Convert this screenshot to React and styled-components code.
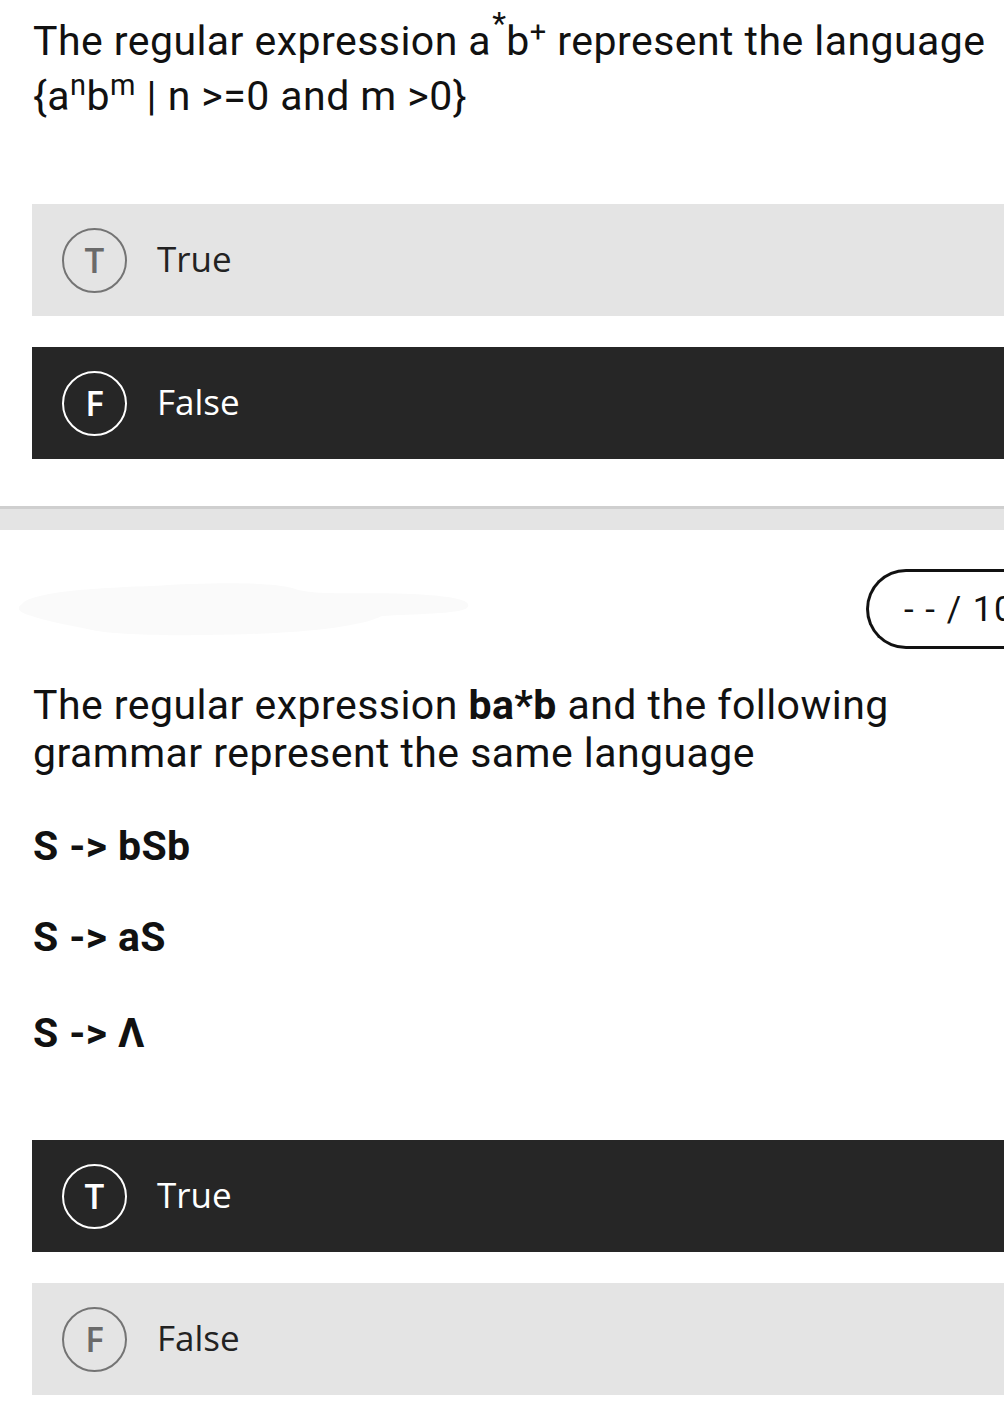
import React from "react";
import styled, { createGlobalStyle } from "styled-components";

const Global = createGlobalStyle`
  html, body { margin: 0; padding: 0; background: #ffffff; }
  body { overflow-x: hidden; width: 1004px; }
  #root { width: 1004px; overflow: hidden; }
`;

const Page = styled.div`
  width: 1004px;
  height: 1420px;
  overflow: hidden;
  font-family: Roboto, "Liberation Sans", Arial, sans-serif;
  color: #111;
`;

const Section = styled.section`
  padding: ${(p) => p.$pt || 0}px 0 0 32px;
`;

const Question = styled.div`
  font-family: Roboto, "Liberation Sans", Arial, sans-serif;
  font-size: 41px;
  letter-spacing: 0.45px;
  line-height: ${(p) => p.$lh || 48}px;
  color: #111;
  padding-left: 1px;
  margin-top: ${(p) => p.$mt || 0}px;
  white-space: nowrap;
  b { font-weight: 700; }
`;

const Sup = styled.span`
  font-size: 29px;
  line-height: 0;
  vertical-align: ${(p) => p.$raise || 15}px;
`;

const Star = styled.span`
  font-size: 32px;
  line-height: 0;
  vertical-align: 21px;
  margin-left: 1px;
`;

const Options = styled.div`
  display: flex;
  flex-direction: column;
  gap: 31px;
  margin-top: ${(p) => p.$mt}px;
`;

const Option = styled.div`
  display: flex;
  align-items: center;
  gap: 30px;
  height: 112px;
  padding-left: 30px;
  background: ${(p) => (p.$selected ? "#262626" : "#e4e4e4")};
  color: ${(p) => (p.$selected ? "#ffffff" : "#222222")};
  font-family: "Open Sans", "Noto Sans", sans-serif;
  font-size: 35px;
`;

const Badge = styled.span`
  box-sizing: border-box;
  width: 65px;
  height: 65px;
  border-radius: 50%;
  border: 2px solid ${(p) => (p.$selected ? "#ffffff" : "#747474")};
  color: ${(p) => (p.$selected ? "#ffffff" : "#6a6a6a")};
  display: flex;
  align-items: center;
  justify-content: center;
  font-family: "Open Sans", "Noto Sans", sans-serif;
  font-weight: 600;
  font-size: 35px;
  line-height: 1;
  padding-bottom: 2px;
  flex-shrink: 0;
`;

const Label = styled.span`
  line-height: 1;
  padding-bottom: 3px;
`;

const Divider = styled.div`
  margin-top: 47px;
  height: 21px;
  border-top: 3px solid #cfcfcf;
  background: #e4e4e4;
`;

const Header = styled.div`
  display: flex;
  align-items: center;
  justify-content: space-between;
  margin-top: 39px;
  padding-left: 12px;
`;

const Blob = styled.svg`
  display: block;
  flex-shrink: 0;
`;

const Points = styled.div`
  box-sizing: border-box;
  width: 200px;
  height: 80px;
  margin-right: -62px;
  border: 3px solid #111;
  border-right: none;
  border-radius: 40px 0 0 40px;
  display: flex;
  align-items: center;
  padding-left: 35px;
  font-family: Roboto, "Liberation Sans", Arial, sans-serif;
  font-size: 35px;
  letter-spacing: 1.5px;
  color: #111;
  flex-shrink: 0;
  white-space: nowrap;
`;

const Rule = styled.p`
  margin: ${(p) => p.$mt}px 0 0 0;
  padding-left: 1px;
  font-family: Roboto, "Liberation Sans", Arial, sans-serif;
  font-weight: 700;
  font-size: 41px;
  letter-spacing: 0.4px;
  line-height: 47px;
  color: #111;
`;

function OptionRow({ letter, label, selected }) {
  return (
    <Option $selected={selected}>
      <Badge $selected={selected}>{letter}</Badge>
      <Label>{label}</Label>
    </Option>
  );
}

export default function App() {
  return (
    <Page>
      <Global />
      <Section $pt={14}>
        <Question $lh={55}>
          The regular expression a<Star>*</Star>b<Sup $raise={13}>+</Sup> represent the language
          <br />
          {"{"}a<Sup>n</Sup>b<Sup>m</Sup> | n &gt;=0 and m &gt;0{"}"}
        </Question>
        <Options $mt={80}>
          <OptionRow letter="T" label="True" />
          <OptionRow letter="F" label="False" selected />
        </Options>
      </Section>
      <Divider />
      <Header>
        <Blob width="460" height="70" viewBox="0 0 460 70" aria-hidden="true">
          <path
            d="M10 30 C 20 18, 80 14, 140 12 C 200 8, 260 8, 280 14 C 300 22, 340 18, 400 20 C 440 22, 462 26, 455 34 C 448 40, 400 40, 370 42 C 350 52, 300 58, 240 60 C 180 62, 110 62, 80 56 C 50 50, 30 46, 20 42 C 6 38, 4 34, 10 30 Z"
            fill="#fafafa"
          />
        </Blob>
        <Points>- - / 10</Points>
      </Header>
      <Section>
        <Question $mt={32}>
          The regular expression <b>ba*b</b> and the following
          <br />
          grammar represent the same language
        </Question>
        <Rule $mt={46}>S -&gt; bSb</Rule>
        <Rule $mt={44}>S -&gt; aS</Rule>
        <Rule $mt={49}>S -&gt; Λ</Rule>
        <Options $mt={83}>
          <OptionRow letter="T" label="True" selected />
          <OptionRow letter="F" label="False" />
        </Options>
      </Section>
    </Page>
  );
}
